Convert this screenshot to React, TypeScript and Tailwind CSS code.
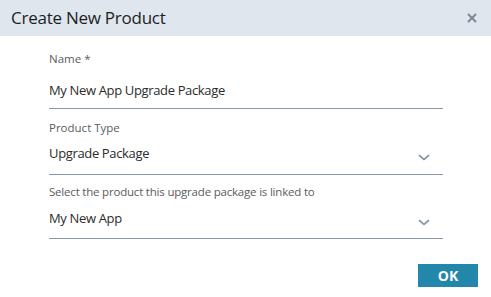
import React from "react";

const Chevron = () => (
  <svg width="12" height="7" viewBox="0 0 12 7" className="mt-[8px]" fill="none">
    <path d="M1 1.2 L6 5.5 L11 1.2" stroke="#7d8c9a" strokeWidth="1.6" />
  </svg>
);

export default function App() {
  return (
    <div
      className="w-[491px] h-[297px] bg-white flex flex-col"
      style={{ fontFamily: '"Open Sans", "Noto Sans", sans-serif' }}
    >
      <div className="h-[36px] bg-[#dfe6ee] flex items-center justify-between pl-[11px] pr-[14px]">
        <span className="text-[17px] leading-[36px] tracking-[-0.25px] text-[#1e1e1e]">Create New Product</span>
        <svg width="10" height="10" viewBox="0 0 10 10">
          <path d="M1 1 L9 9 M9 1 L1 9" stroke="#7b8896" strokeWidth="2" />
        </svg>
      </div>
      <div className="flex flex-col pl-[49px] pr-[48px]">
        <div className="pt-[15px] flex flex-col border-b border-[#8797a6]">
          <div className="text-[11.5px] leading-[16px] text-[#5c5c5c]">Name *</div>
          <div className="mt-[13px] mb-[8px] text-[13px] leading-[20px] tracking-[-0.35px] text-[#2b2b2b]">
            My New App Upgrade Package
          </div>
        </div>
        <div className="pt-[11px] flex flex-col border-b border-[#8797a6]">
          <div className="text-[11.5px] leading-[16px] text-[#5c5c5c]">Product Type</div>
          <div className="mt-[7px] mb-[11px] h-[20px] flex items-center justify-between pr-[13px]">
            <span className="text-[13px] leading-[20px] tracking-[-0.35px] text-[#2b2b2b]">Upgrade Package</span>
            <Chevron />
          </div>
        </div>
        <div className="pt-[9px] flex flex-col border-b border-[#8797a6]">
          <div className="text-[11.5px] leading-[16px] tracking-[-0.2px] text-[#5c5c5c]">
            Select the product this upgrade package is linked to
          </div>
          <div className="mt-[8px] mb-[10px] h-[20px] flex items-center justify-between pr-[13px]">
            <span className="text-[13px] leading-[20px] tracking-[-0.35px] text-[#2b2b2b]">My New App</span>
            <Chevron />
          </div>
        </div>
      </div>
      <div className="flex justify-end pr-[13px] mt-[25px]">
        <button className="w-[60px] h-[23px] bg-[#2387ab] text-white text-[14px] font-bold leading-[23px]">
          OK
        </button>
      </div>
    </div>
  );
}
